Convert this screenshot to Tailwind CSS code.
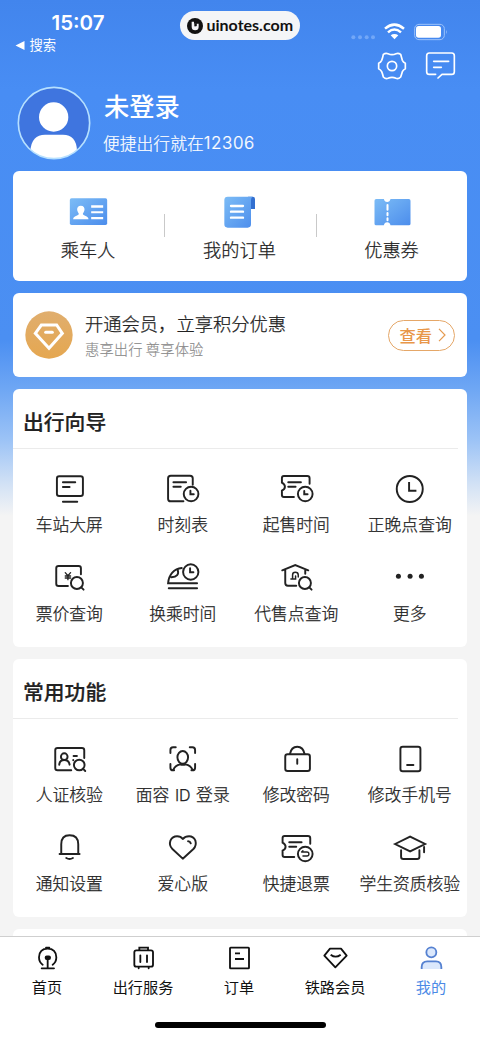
<!DOCTYPE html>
<html lang="zh-CN">
<head>
<meta charset="utf-8">
<title>我的</title>
<script src="https://cdn.jsdelivr.net/npm/@tailwindcss/browser@4"></script>
</head>
<body class="bg-[#f4f4f4] font-['Noto_Sans_CJK_SC',sans-serif] text-[#222]">
<div class="flex h-[1039px] w-[480px] flex-col overflow-hidden bg-[#f4f4f4]">
  <main class="flex min-h-0 flex-1 flex-col overflow-hidden bg-[linear-gradient(180deg,#4285ed_0px,#488df4_90px,#4b8ff2_340px,#6fa7f4_390px,#9cc3f6_440px,#d3e2f5_485px,#f4f4f4_516px)]">
    <header class="relative h-[171px] shrink-0 text-white">
      <div class="flex h-[56px] justify-between">
        <div class="pl-[15px] pt-[10px]">
          <div class="pl-[36.5px] font-['Inter',sans-serif] text-[20.5px] font-semibold leading-[26px]">15:07</div>
          <div class="flex items-center gap-[4.5px] text-[13.3px] leading-[18px]"><svg class="h-[9px] w-[10px]" viewBox="0 0 10 9"><path d="M.5 4.5 9.5 0V9Z" fill="#fff"/></svg>搜索</div>
        </div>
        <div class="flex items-start pr-[32px] pt-[22px]">
          <svg class="h-[20px] w-[98px]" viewBox="330 66 294 60" fill="none">
            <g fill="#72a7f7"><circle cx="340" cy="112" r="6"/><circle cx="360" cy="112" r="6"/><circle cx="380" cy="112" r="6"/><circle cx="399" cy="112" r="6"/></g>
            <path d="M435 86Q463 62 492 86M444 97Q463 80 483 97" stroke="#fff" stroke-width="7.5"/><path d="M452 106Q463 98 475 106L463.500 118Z" fill="#fff"/>
            <rect x="524" y="73" width="89" height="46" rx="13" stroke="#9cc2fa" stroke-width="3"/><rect x="528" y="78" width="75" height="35" rx="8" fill="#fff"/><path d="M618 89q5 7 0 14z" fill="#9cc2fa"/>
          </svg>
        </div>
      </div>
      <div class="absolute left-[180px] top-[11px] flex h-[29px] w-[120px] items-center gap-[4px] rounded-full bg-[#f4f5f7] pl-[6.5px] text-[#111]">
        <svg class="size-[16px] shrink-0" viewBox="0 0 48 48"><circle cx="24" cy="24" r="24" fill="#111"/><path d="M14 11H21V17H26V24H29V17H35V26A10.500 10.500 0 0 1 14 26Z" fill="#f4f5f7"/><path d="M22 17H28V25H22Z" fill="#111"/></svg>
        <span class="pb-px font-['Lato',sans-serif] text-[16px] font-bold leading-none">uinotes.com</span>
      </div>
      <div class="absolute left-[376px] top-[49px] flex gap-[12px]">
        <svg class="size-[34px]" viewBox="408 147 102 102" fill="none" stroke="#fff" stroke-width="5" stroke-linejoin="round"><path d="M430 163Q437 158 444 161Q456 167 468 161Q475 158 482 163Q485 174 487 181Q490 187 496 190V206Q490 209 487 215Q485 222 482 231Q475 238 468 235Q456 229 444 235Q437 238 430 231Q428 222 425 215Q422 209 416 206V190Q422 187 425 181Q428 174 430 163Z"/><circle cx="456" cy="198" r="14"/></svg>
        <svg class="size-[34px]" viewBox="546 147 102 102" fill="none" stroke="#fff" stroke-width="5" stroke-linecap="round" stroke-linejoin="round"><path d="M587 223H568Q560 223 560 215V167Q560 159 568 159H635Q643 159 643 167V215Q643 223 635 223H606L594 234M581 184H626M581 202H604"/></svg>
      </div>
      <div class="flex pl-[17px] pt-[30px]">
        <svg class="size-[74px] shrink-0" viewBox="50 256 222 222"><defs><clipPath id="av"><circle cx="161" cy="367" r="107"/></clipPath></defs><circle cx="161" cy="367" r="107" fill="#3f75df"/><g fill="#fff" clip-path="url(#av)"><circle cx="160" cy="349" r="44"/><path d="M90 480V450Q94 402 134 402H188Q228 402 230 450V480Z"/></g><circle cx="161" cy="367" r="107" fill="none" stroke="#b6e0ff" stroke-width="5"/></svg>
        <div class="pl-[12px]">
          <div class="pl-px pt-[2px] text-[25.3px] font-medium leading-[34px]">未登录</div>
          <div class="mt-[9px] flex text-[16.8px] font-light leading-[24px] [-webkit-text-stroke:0.2px]">便捷出行就在<span class="font-['Inter',sans-serif] text-[17px] font-light tracking-[0.6px]">12306</span></div>
        </div>
      </div>
    </header>

    <div class="mx-[13px] flex shrink-0 flex-col gap-[12px]">
      <section class="grid h-[110px] grid-cols-[151px_152px_151px] rounded-[6px] bg-white text-[18.2px] font-light leading-[26px] [-webkit-text-stroke:0.25px]">
        <div class="flex flex-col items-center pt-[19px]">
          <svg class="h-[40px] w-[48px]" viewBox="193.500 75 144 120"><defs><linearGradient id="b1" x1="0" y1="0" x2="1" y2="1"><stop stop-color="#7cbcf6"/><stop offset="1" stop-color="#4c8dec"/></linearGradient></defs><rect x="208" y="100" width="112" height="80" rx="5" fill="url(#b1)"/><g fill="#fff"><path d="M241 122C249 122 253 128 252 135C251 141 247 144 247 147C247 152 264 152 264 163H218C218 152 235 152 235 147C235 144 231 141 230 135C229 128 233 122 241 122Z"/><path d="M272 121H308V128H272ZM272 139H308V145H272ZM272 156H308V163H272Z"/></g></svg>
          <div class="mr-px mt-[6px]">乘车人</div>
        </div>
        <div class="relative flex flex-col items-center pt-[19px] before:absolute before:left-0 before:top-[43px] before:h-[23px] before:w-px before:bg-[#c9c9c9] after:absolute after:-right-px after:top-[43px] after:h-[23px] after:w-px after:bg-[#c9c9c9]">
          <svg class="h-[40px] w-[48px]" viewBox="648 75 144 120"><path d="M744 95H758Q765 95 765 102V132H750Z" fill="#326fd0"/><path d="M683 95H758Q753 97 753 106V178Q753 188 743 188H683Q673 188 673 178V105Q673 95 683 95Z" fill="url(#b1)"/><path d="M693 123H729M693 140H729M693 158H729" stroke="#fff" stroke-width="7" stroke-linecap="round"/></svg>
          <div class="mr-px mt-[6px]">我的订单</div>
        </div>
        <div class="flex flex-col items-center pt-[19px]">
          <svg class="h-[40px] w-[48px]" viewBox="382.500 75 144 120"><path d="M407 102H430Q432 111 440 111Q448 111 450 102H505Q510 102 510 107V176Q510 181 505 181H450Q448 172 440 172Q432 172 430 181H407Q402 181 402 176V107Q402 102 407 102Z" fill="url(#b1)"/><path d="M441 120V134M441 144V151M441 160V166" stroke="#fff" stroke-width="6" stroke-linecap="round"/></svg>
          <div class="mt-[6px]">优惠券</div>
        </div>
      </section>

      <section class="flex h-[84px] items-center rounded-[6px] bg-white pl-[12px] pr-[12.5px]">
        <svg class="size-[48px] shrink-0" viewBox="76 438 144 144"><defs><linearGradient id="g1" x1="0" y1="0" x2="0" y2="1"><stop stop-color="#e0ae6e"/><stop offset="1" stop-color="#e5a750"/></linearGradient></defs><circle cx="148" cy="510" r="71" fill="url(#g1)"/><path d="M125 480H171L188 505L148 550L107 505Z" fill="none" stroke="#fff" stroke-width="9"/><path d="M138 502H158" stroke="#fff" stroke-width="9" stroke-linecap="round"/></svg>
        <div class="flex-1 pl-[12px]">
          <div class="text-[18.3px] font-light leading-[26px] [-webkit-text-stroke:0.25px]">开通会员，立享积分优惠</div>
          <div class="mt-[2px] text-[14.3px] font-light leading-[22px] tracking-[0.1px] text-[#8a8a8a] [-webkit-text-stroke:0.15px]">惠享出行 尊享体验</div>
        </div>
        <div class="flex h-[31px] w-[67px] items-center rounded-full border border-[#e5a768] pl-[11px] text-[16.3px] font-medium leading-[24px] text-[#e8974a]">查看<svg class="ml-[6px] h-[14px] w-[8px]" viewBox="0 0 8 14"><path d="M1 .8 7 7 1 13.200" fill="none" stroke="#e59a4e" stroke-width="1.200"/></svg></div>
      </section>

      <section class="h-[258px] rounded-[6px] bg-white">
        <div class="mr-[9px] flex h-[60px] items-center border-b border-[#ebebeb] pl-[10px] pt-[5px] text-[20.8px] font-medium leading-[30px] [-webkit-text-stroke:0.2px]">出行向导</div>
        <div class="-ml-[0.5px] mr-[0.5px] grid grid-cols-4 pt-[24px] text-[16.8px] font-light leading-[24px] [-webkit-text-stroke:0.25px] [&>div]:flex [&>div]:h-[89px] [&>div]:flex-col [&>div]:items-center [&>div]:gap-[7px] [&>div]:whitespace-nowrap [&_svg]:ml-px [&_svg]:h-[32px] [&_svg]:w-[36px] [&_svg]:shrink-0 [&_svg]:fill-none [&_svg]:stroke-[#222] [&_svg]:stroke-[5.8px]">
          <div><svg viewBox="155.250 264 108 96" stroke-linecap="round"><rect x="170" y="274" width="78" height="59" rx="7"/><path d="M188 292H225M188 306H208M188 350H231"/></svg>车站大屏</div>
          <div><svg viewBox="495.750 264 108 96" stroke-linecap="round"><path d="M551 349H513Q505 349 505 341V280Q505 272 513 272H571Q579 272 579 280V299M521 292H559M521 305H543"/><circle cx="574" cy="327" r="22"/><path d="M572 317V328H582"/></svg>时刻表</div>
          <div><svg viewBox="116.250 264 108 96" stroke-linecap="round"><path d="M161 336H131Q125 336 125 330V317Q134 312 134 305Q134 298 125 293V279Q125 273 131 273H201Q208 273 208 280V296M144 292H182M144 305H166"/><circle cx="195" cy="327" r="22"/><path d="M192 318V328H202"/></svg>起售时间</div>
          <div><svg viewBox="456.750 264 108 96"><circle cx="510" cy="312" r="39"/><path d="M508 291V317H530"/></svg>正晚点查询</div>
          <div><svg viewBox="155.250 531 108 96" stroke-linecap="round"><path d="M203 603H175Q168 603 168 596V550Q168 543 175 543H235Q242 543 242 550V568"/><path d="M195 563 203 572 211 563M203 572V584M195 573H211M195 579H211" stroke-width="4"/><circle cx="230" cy="594" r="18"/><path d="M243 607 250 614"/></svg>票价查询</div>
          <div><svg viewBox="495.750 531 108 96" stroke-linecap="round"><path d="M546 549C523 551 507 569 505 595H592M534 555Q540 575 515 577M507 610H592"/><circle cx="573" cy="561" r="23"/><path d="M571 550V562H581"/></svg>换乘时间</div>
          <div><svg viewBox="116.250 531 108 96" stroke-linecap="round"><path d="M126 556 165 540 204 556M135 555V594Q135 602 143 602H168M195 555V566"/><path d="M152 582H166V573M157 581V570Q157 562 165 562Q174 562 174 570V576" stroke-width="4.500"/><circle cx="194" cy="594" r="18"/><path d="M207 607 214 614"/></svg>代售点查询</div>
          <div><svg viewBox="456.750 531 108 96"><g class="fill-[#222] stroke-none"><circle cx="476" cy="574" r="7.500"/><circle cx="511" cy="574" r="7.500"/><circle cx="545" cy="574" r="7.500"/></g></svg>更多</div>
        </div>
      </section>

      <section class="h-[258px] rounded-[6px] bg-white">
        <div class="mr-[9px] flex h-[60px] items-center border-b border-[#ebebeb] pl-[10px] pt-[5px] text-[20.8px] font-medium leading-[30px] [-webkit-text-stroke:0.2px]">常用功能</div>
        <div class="-ml-[0.5px] mr-[0.5px] grid grid-cols-4 pt-[24px] text-[16.8px] font-light leading-[24px] [-webkit-text-stroke:0.25px] [&>div]:flex [&>div]:h-[89px] [&>div]:flex-col [&>div]:items-center [&>div]:gap-[7px] [&>div]:whitespace-nowrap [&_svg]:ml-px [&_svg]:h-[32px] [&_svg]:w-[36px] [&_svg]:shrink-0 [&_svg]:fill-none [&_svg]:stroke-[#222] [&_svg]:stroke-[5.8px]">
          <div><svg viewBox="155.250 264 108 96" stroke-linecap="round"><path d="M213 346H172Q165 346 165 339V286Q165 279 172 279H245Q252 279 252 286V309M220 303H230"/><circle cx="192" cy="305" r="10"/><path d="M177 329Q178 315 192 315Q206 315 208 329M219 315V316"/><circle cx="237" cy="330" r="16"/><path d="M248 341 255 348"/></svg>人证核验</div>
          <div><svg viewBox="495.750 264 108 96" stroke-linecap="round"><path d="M512 294V285Q512 277 520 277H528M570 277H578Q586 277 586 285V294M512 327V338Q512 346 520 346H523M575 346H578Q586 346 586 338V327"/><ellipse cx="549" cy="307" rx="16" ry="19"/><path d="M521 344Q526 331 541 328Q549 331 558 328Q573 331 578 344"/></svg><div>面容<span class="mx-[5.5px] font-['Inter',sans-serif] text-[16px] font-light leading-none">ID</span>登录</div></div>
          <div><svg viewBox="116.250 264 108 96" stroke-linecap="round"><rect x="135" y="298" width="74" height="50" rx="7"/><path d="M149 297Q153 275 171 275Q189 275 193 297M171 313V326"/></svg>修改密码</div>
          <div><svg viewBox="456.750 264 108 96" stroke-linecap="round"><rect x="482" y="275" width="60" height="74" rx="7"/><path d="M502 330H521"/></svg>修改手机号</div>
          <div><svg viewBox="155.250 531 108 96" stroke-linecap="round"><path d="M178 597H238M183 597V568Q183 541 208 541Q234 541 234 568V597M198 609Q208 615 218 609"/></svg>通知设置</div>
          <div><svg viewBox="495.750 531 108 96" stroke-linecap="round" stroke-linejoin="round"><path d="M549 611 518 582Q507 571 512 557Q518 544 532 544Q543 544 549 552Q556 544 568 544Q581 544 587 557Q591 571 581 582ZM565 559Q571 559 573 565"/></svg>爱心版</div>
          <div><svg viewBox="116.250 531 108 96" stroke-linecap="round"><path d="M162 606H133Q127 606 127 600V587Q136 582 136 575Q136 568 127 563V549Q127 543 133 543H203Q210 543 210 550V566M147 562H184M147 575H168"/><circle cx="195" cy="597" r="22"/><path d="M184 591H200Q206 591 206 597Q206 603 200 603H188M188 587 184 591" stroke-width="4"/></svg>快捷退票</div>
          <div><svg viewBox="456.750 531 108 96" stroke-linecap="round"><path d="M466 567 511 545 556 567 511 589ZM484 586V605Q484 612 491 612H532Q539 612 539 605V586M553 576V592"/></svg>学生资质核验</div>
        </div>
      </section>

      <section class="h-[60px] rounded-[6px] bg-white"></section>
    </div>
  </main>

  <nav class="h-[103px] shrink-0 border-t border-[#cfcfcf] bg-white">
    <div class="-ml-[1px] mr-[1px] grid grid-cols-5 pt-[5px] text-[15.2px] leading-[22px] text-[#111] [&>div]:flex [&>div]:flex-col [&>div]:items-center [&>div]:gap-px [&_svg]:h-[32px] [&_svg]:w-[36px] [&_svg]:fill-none [&_svg]:stroke-[5.5px]">
      <div><svg viewBox="87 81 108 96" stroke="#111" stroke-linecap="round"><path d="M128 149Q117 142 117 127Q118 101 143 101Q168 101 169 127Q169 142 158 149M138 98H148M143 130V159M125 160H162"/><rect x="137" y="124" width="13" height="8" rx="3" fill="#111"/></svg>首页</div>
      <div><svg viewBox="375 81 108 96" stroke="#111" stroke-linecap="round"><rect x="403" y="106" width="56" height="49" rx="6"/><path d="M418 105V98H444V105M421 121V141M441 121V141M416 157V160M446 157V160"/></svg>出行服务</div>
      <div><svg viewBox="663 81 108 96" stroke="#111"><rect x="690" y="98" width="57" height="62" rx="2"/><path d="M705 115H720M705 132H732"/></svg>订单</div>
      <div><svg viewBox="231 81 108 96" stroke="#111" stroke-linejoin="round"><path d="M270 101H303L320 122L286 157L253 122ZM272 119Q287 131 302 119"/></svg>铁路会员</div>
      <div class="text-[#4b8ae6]"><svg viewBox="519 81 108 96" stroke="#5581d1"><circle cx="574" cy="112" r="15" class="fill-[#dbe8fc]"/><path d="M545 162V156Q545 139 562 139H588Q604 139 604 156V162" class="fill-[#dbe8fc]"/></svg>我的</div>
    </div>
    <div class="mx-auto mt-[25px] h-[6px] w-[171px] rounded-full bg-black"></div>
  </nav>
</div>
</body>
</html>
